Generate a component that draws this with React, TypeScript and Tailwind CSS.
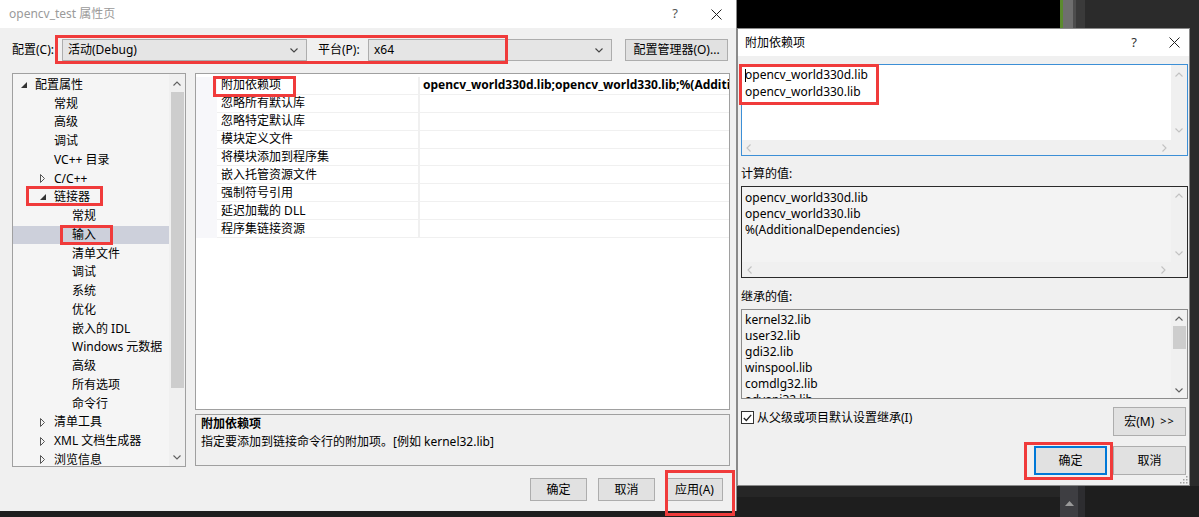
import React from "react";

const FONT = "font-['Noto_Sans','Noto_Sans_CJK_SC',sans-serif]";

type TreeItem = { level: 0 | 1 | 2; label: string; arrow?: "open" | "closed"; selected?: boolean };

const TREE: TreeItem[] = [
  { level: 0, label: "配置属性", arrow: "open" },
  { level: 1, label: "常规" },
  { level: 1, label: "高级" },
  { level: 1, label: "调试" },
  { level: 1, label: "VC++ 目录" },
  { level: 1, label: "C/C++", arrow: "closed" },
  { level: 1, label: "链接器", arrow: "open" },
  { level: 2, label: "常规" },
  { level: 2, label: "输入", selected: true },
  { level: 2, label: "清单文件" },
  { level: 2, label: "调试" },
  { level: 2, label: "系统" },
  { level: 2, label: "优化" },
  { level: 2, label: "嵌入的 IDL" },
  { level: 2, label: "Windows 元数据" },
  { level: 2, label: "高级" },
  { level: 2, label: "所有选项" },
  { level: 2, label: "命令行" },
  { level: 1, label: "清单工具", arrow: "closed" },
  { level: 1, label: "XML 文档生成器", arrow: "closed" },
  { level: 1, label: "浏览信息", arrow: "closed" },
];

const LEVEL_PAD = ["pl-[8px]", "pl-[27px]", "pl-[45px]"];

const PROPS = [
  "附加依赖项",
  "忽略所有默认库",
  "忽略特定默认库",
  "模块定义文件",
  "将模块添加到程序集",
  "嵌入托管资源文件",
  "强制符号引用",
  "延迟加载的 DLL",
  "程序集链接资源",
];

const INHERITED = ["kernel32.lib", "user32.lib", "gdi32.lib", "winspool.lib", "comdlg32.lib", "advapi32.lib"];

function Chevron({ dir, color = "#606060" }: { dir: "up" | "down" | "left" | "right"; color?: string }) {
  const pts = {
    up: "0.5,4.5 4,1 7.5,4.5",
    down: "0.5,0.5 4,4 7.5,0.5",
    left: "4.5,0.5 1,4 4.5,7.5",
    right: "0.5,0.5 4,4 0.5,7.5",
  }[dir];
  const vertical = dir === "up" || dir === "down";
  return (
    <svg width={vertical ? 8 : 5} height={vertical ? 5 : 8} viewBox={vertical ? "0 0 8 5" : "0 0 5 8"}>
      <polyline points={pts} fill="none" stroke={color} strokeWidth="1.1" />
    </svg>
  );
}

function CloseX() {
  return (
    <svg width="11" height="11" viewBox="0 0 11 11">
      <line x1="0.5" y1="0.5" x2="10.5" y2="10.5" stroke="#222" strokeWidth="1" />
      <line x1="10.5" y1="0.5" x2="0.5" y2="10.5" stroke="#222" strokeWidth="1" />
    </svg>
  );
}

function TreeArrow({ kind }: { kind?: "open" | "closed" }) {
  if (kind === "open")
    return (
      <svg width="6" height="6" viewBox="0 0 6 6">
        <polygon points="6,0 6,6 0,6" fill="#333" />
      </svg>
    );
  if (kind === "closed")
    return (
      <svg width="5" height="9" viewBox="0 0 5 9">
        <polygon points="0.5,0.5 4.5,4.5 0.5,8.5" fill="none" stroke="#555" strokeWidth="1" />
      </svg>
    );
  return null;
}

function Combo({ text, width }: { text: string; width: string }) {
  return (
    <div className={`${width} h-[22px] border border-[#adadad] bg-[#e5e5e5] flex items-center pl-[5px] pr-[8px]`}>
      <span className="flex-1">{text}</span>
      <Chevron dir="down" color="#444" />
    </div>
  );
}

function Btn({ children, className = "" }: { children: React.ReactNode; className?: string }) {
  return (
    <div className={`h-[23px] w-[57px] border border-[#adadad] bg-[#e1e1e1] flex items-center justify-center ${className}`}>
      {children}
    </div>
  );
}

function RedBox({ className }: { className: string }) {
  return <div className={`absolute border-[3px] border-[#f03b3b] pointer-events-none ${className}`} />;
}

function PropertyPages() {
  return (
    <div className="w-[737px] h-[511px] shrink-0 flex flex-col bg-[#f0f0f0] border-r border-[#8a8a8a]">
      {/* title bar */}
      <div className="h-[28px] bg-white flex items-center pl-[9px] pr-[14px]">
        <span className="text-[#9a9a9a]">opencv_test 属性页</span>
        <span className="ml-auto text-[#555] text-[13px]">?</span>
        <div className="ml-[33px]">
          <CloseX />
        </div>
      </div>

      {/* configuration / platform */}
      <div className="flex items-center h-[22px] mt-[11px] pl-[12px]">
        <span className="w-[50px]">配置(C):</span>
        <Combo text="活动(Debug)" width="w-[245px]" />
        <span className="ml-[11px] w-[50px]">平台(P):</span>
        <Combo text="x64" width="w-[244px]" />
        <div className="ml-[13px] w-[103px] h-[22px] border border-[#adadad] bg-[#e1e1e1] flex items-center justify-center">
          配置管理器(O)...
        </div>
      </div>

      <div className="flex mt-[12px] pl-[12px] h-[394px]">
        {/* category tree */}
        <div className="w-[174px] h-full border border-[#a0a0a0] bg-[#f5f5f5] flex">
          <div className="flex-1 overflow-hidden pt-[1.5px]">
            {TREE.map((t, i) => (
              <div
                key={i}
                className={`h-[18.75px] flex items-center ${LEVEL_PAD[t.level]} ${t.selected ? "bg-[#cdd0db]" : ""}`}
              >
                <div className="w-[14px] h-full flex items-center">
                  <TreeArrow kind={t.arrow} />
                </div>
                <span className="whitespace-nowrap">{t.label}</span>
              </div>
            ))}
          </div>
          <div className="w-[16px] bg-[#f0f0f0] flex flex-col items-center">
            <div className="h-[18px] flex items-center">
              <Chevron dir="up" />
            </div>
            <div className="w-[13px] h-[296px] bg-[#cdcdcd]" />
            <div className="mt-auto h-[18px] flex items-center">
              <Chevron dir="down" />
            </div>
          </div>
        </div>

        <div className="ml-[9px] w-[535px] flex flex-col">
          {/* property grid */}
          <div className="h-[337px] bg-white border border-[#a0a0a0] pt-[3px] overflow-hidden">
            {PROPS.map((p, i) => (
              <div key={p} className="flex h-[17.9px]">
                <div className="w-[21px] bg-[#f7f7fa]" />
                <div className="w-[201px] pl-[4px] border-b border-[#f0f0f0] flex items-center whitespace-nowrap">{p}</div>
                <div className="w-[2px] bg-[#f0f0f0]" />
                <div className="flex-1 pl-[3px] border-b border-[#f0f0f0] flex items-center overflow-hidden whitespace-nowrap font-bold">
                  {i === 0 ? "opencv_world330d.lib;opencv_world330.lib;%(AdditionalDependencies)" : ""}
                </div>
              </div>
            ))}
          </div>
          {/* description */}
          <div className="mt-[4px] h-[52px] border border-[#a0a0a0] bg-[#f0f0f0] px-[5px] leading-[18px]">
            <div className="font-bold">附加依赖项</div>
            <div>指定要添加到链接命令行的附加项。[例如 kernel32.lib]</div>
          </div>
        </div>
      </div>

      <div className="flex justify-end gap-[11px] pr-[13px] mt-[11px]">
        <Btn>确定</Btn>
        <Btn>取消</Btn>
        <Btn>应用(A)</Btn>
      </div>
    </div>
  );
}

function ScrollCorner({ muted }: { muted?: boolean }) {
  const c = muted ? "#c2c2c2" : "#606060";
  return (
    <>
      <div className="flex flex-col items-center justify-between py-[6px] bg-[#f0f0f0]">
        <Chevron dir="up" color={c} />
        <Chevron dir="down" color={c} />
      </div>
      <div className="flex items-center justify-between px-[5px] bg-[#f0f0f0]">
        <Chevron dir="left" color={c} />
        <Chevron dir="right" color={c} />
      </div>
      <div className="bg-[#f0f0f0]" />
    </>
  );
}

function DepsDialog() {
  return (
    <div className="relative w-[453px] h-[458px] shrink-0 bg-[#f0f0f0] border border-[#8a8a8a] flex flex-col">
      <div className="h-[27px] bg-white flex items-center pl-[7px] pr-[9px]">
        <span>附加依赖项</span>
        <span className="ml-auto text-[#333] text-[13px]">?</span>
        <div className="ml-[32px]">
          <CloseX />
        </div>
      </div>

      <div className="pl-[3px] pr-[1px] flex flex-col">
        {/* editable list */}
        <div className="mt-[8px] h-[92px] border border-[#3c8fd6] bg-white grid grid-cols-[1fr_16px] grid-rows-[1fr_15px]">
          <div className="pl-[3px] pt-[2px] leading-[16.5px]">
            <div className="flex items-center">
              <span className="w-[1px] h-[13px] bg-black mr-[-1px]" />
              opencv_world330d.lib
            </div>
            <div>opencv_world330.lib</div>
          </div>
          <div className="flex flex-col items-center justify-between py-[7px] bg-[#f0f0f0]">
            <Chevron dir="up" color="#c2c2c2" />
            <Chevron dir="down" color="#c2c2c2" />
          </div>
          <div className="flex items-center justify-between px-[4px] bg-[#f0f0f0]">
            <Chevron dir="left" color="#c2c2c2" />
            <Chevron dir="right" color="#c2c2c2" />
          </div>
          <div className="bg-[#f0f0f0]" />
        </div>

        <div className="mt-[10px] h-[16px] leading-[16px]">计算的值:</div>
        {/* evaluated value */}
        <div className="mt-[4px] h-[92px] border border-[#2a2a2a] bg-[#f3f3f3] grid grid-cols-[1fr_16px] grid-rows-[1fr_15px]">
          <div className="pl-[3px] pt-[2.5px] leading-[16px]">
            <div>opencv_world330d.lib</div>
            <div>opencv_world330.lib</div>
            <div>%(AdditionalDependencies)</div>
          </div>
          <ScrollCorner muted />
        </div>

        <div className="mt-[11px] h-[16px] leading-[16px]">继承的值:</div>
        {/* inherited values */}
        <div className="mt-[4px] h-[90px] border border-[#8c8c8c] bg-[#f3f3f3] flex">
          <div className="flex-1 pl-[3px] pt-[2px] leading-[16px] overflow-hidden">
            {INHERITED.map((l) => (
              <div key={l}>{l}</div>
            ))}
          </div>
          <div className="w-[16px] bg-[#f0f0f0] flex flex-col items-center">
            <div className="h-[16px] flex items-center">
              <Chevron dir="up" />
            </div>
            <div className="w-[13px] h-[23px] bg-[#cdcdcd]" />
            <div className="mt-auto h-[16px] flex items-center">
              <Chevron dir="down" />
            </div>
          </div>
        </div>

        <div className="mt-[8px] h-[29px] flex pr-[2px]">
          <div className="flex items-start pt-[4px]">
            <div className="w-[13px] h-[13px] bg-white border border-[#333] flex items-center justify-center">
              <svg width="9" height="8" viewBox="0 0 9 8">
                <polyline points="0.8,4 3.3,6.5 8.2,0.8" fill="none" stroke="#222" strokeWidth="1.3" />
              </svg>
            </div>
            <span className="ml-[3px] leading-[14px]">从父级或项目默认设置继承(I)</span>
          </div>
          <div className="ml-auto w-[73px] h-[29px] border border-[#adadad] bg-[#e1e1e1] flex items-center justify-center">
            宏(M) <span className="ml-[6px] text-[11px] tracking-[1px]">&gt;&gt;</span>
          </div>
        </div>

        <div className="mt-[10px] h-[29px] flex justify-end gap-[6px] pr-[2px]">
          <div className="w-[73px] h-[29px] border-2 border-[#0078d7] bg-[#e1e1e1] flex items-center justify-center">确定</div>
          <div className="w-[73px] h-[29px] border border-[#adadad] bg-[#e1e1e1] flex items-center justify-center">取消</div>
        </div>
      </div>

      {/* size grip */}
      <svg className="absolute right-[1px] bottom-[1px]" width="10" height="10" viewBox="0 0 10 10">
        {[
          [8, 2],
          [8, 5],
          [5, 5],
          [8, 8],
          [5, 8],
          [2, 8],
        ].map(([x, y], i) => (
          <rect key={i} x={x} y={y} width="1.5" height="1.5" fill="#a0a0a0" />
        ))}
      </svg>
    </div>
  );
}

export default function App() {
  return (
    <div className={`relative w-[1199px] h-[517px] overflow-hidden bg-[#1e1e1e] flex text-[12px] text-black ${FONT}`}>
      <PropertyPages />

      <div className="flex-1 flex flex-col">
        {/* editor backdrop behind the dialog */}
        <div className="h-[28px] flex shrink-0">
          <div className="w-[323px] bg-black" />
          <div className="w-[3px] bg-[#5b8a2e]" />
          <div className="w-[10px] bg-[#6e6e6e]" />
          <div className="w-[3px] bg-[#4d4d4d]" />
          <div className="w-[9px] bg-[#3a3a3a]" />
          <div className="flex-1 bg-[#2b2b2b]" />
        </div>
        <div className="flex h-[458px] shrink-0">
          <DepsDialog />
          <div className="flex-1 bg-[#2b2b2b]" />
        </div>
        <div className="flex-1 flex">
          <div className="w-[323px] flex flex-col">
            <div className="h-[11px] bg-[#262626]" />
            <div className="flex-1 bg-[#1e1e1e]" />
          </div>
          <div className="w-[18px] bg-[#3e3e42] flex justify-center pt-[15px]">
            <svg width="9" height="5" viewBox="0 0 9 5">
              <polygon points="0,5 4.5,0 9,5" fill="#9a9a9a" />
            </svg>
          </div>
          <div className="w-[7px] bg-[#2d2d30]" />
          <div className="flex-1 bg-[#1e1e1e]" />
        </div>
      </div>

      <RedBox className="left-[55px] top-[35px] w-[453px] h-[29px]" />
      <RedBox className="left-[213px] top-[76px] w-[83px] h-[21px]" />
      <RedBox className="left-[26px] top-[186px] w-[77px] h-[20px]" />
      <RedBox className="left-[60px] top-[225px] w-[53px] h-[20px]" />
      <RedBox className="left-[665px] top-[470px] w-[70px] h-[46px]" />
      <RedBox className="left-[739px] top-[64px] w-[140px] h-[41px]" />
      <RedBox className="left-[1024px] top-[442px] w-[89px] h-[38px]" />
    </div>
  );
}
